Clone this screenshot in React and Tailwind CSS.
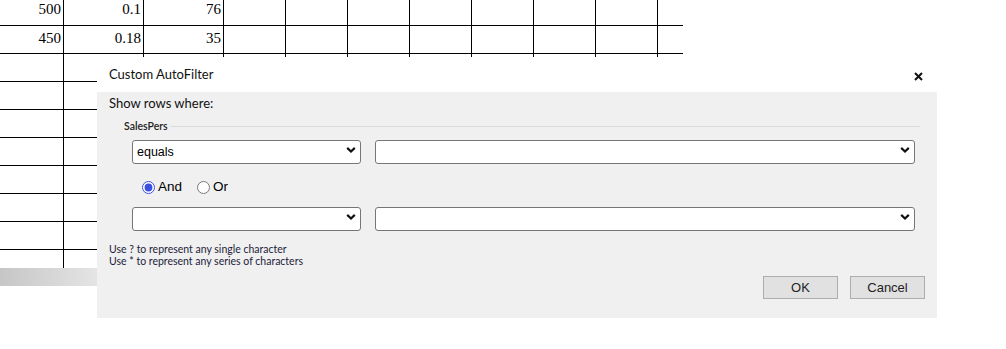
import { useState } from "react";

const widths = [64, 80, 80, 62, 62, 62, 62, 62, 62, 62];
const rows = [
  ["500", "0.1", "76"],
  ["450", "0.18", "35"],
  [], [], [], [], [], [], [],
];

function Chevron() {
  return (
    <svg className="pointer-events-none absolute right-[5px] top-1/2 -translate-y-1/2" width="10" height="7" viewBox="0 0 10 7">
      <path d="M1.2 1.4 L5 5 L8.8 1.4" fill="none" stroke="#111" strokeWidth="2.2" />
    </svg>
  );
}

function Select({ className, value, options }) {
  return (
    <div className={`relative h-6 ${className}`}>
      <select
        defaultValue={value}
        className="h-full w-full appearance-none rounded-[3px] border border-[#767676] bg-white pl-[4px] text-[12.5px] text-black"
        style={{ fontFamily: '"Liberation Sans", Arial, sans-serif' }}
      >
        {options.map((o) => (
          <option key={o}>{o}</option>
        ))}
      </select>
      <Chevron />
    </div>
  );
}

export default function App() {
  const [join, setJoin] = useState("and");
  const ops = ["", "equals", "does not equal", "begins with", "ends with", "contains"];

  return (
    <div className="relative h-[349px] w-[1006px] overflow-hidden bg-white">
      {/* sheet behind */}
      <div style={{ fontFamily: '"Liberation Serif", "Times New Roman", serif' }} className="text-[15px] text-black">
        {rows.map((r, i) => (
          <div key={i} className={`flex w-[683px] border-b border-black ${i === 0 ? "h-[26px]" : "h-[28px]"}`}>
            {widths.map((w, j) => (
              <div
                key={j}
                style={{ width: w }}
                className={`shrink-0 border-r border-black pr-[2px] text-right leading-[17px] ${i === 0 ? "pt-[1px]" : "pt-[4px]"}`}
              >
                {r[j] || ""}
              </div>
            ))}
          </div>
        ))}
        <div className="flex h-[18px]">
          <div className="w-[64px] shrink-0 border-r border-black" />
        </div>
        <div className="h-[18px] w-[180px] bg-gradient-to-r from-[#c6c6c6] to-white" />
      </div>

      {/* dialog */}
      <div
        className="absolute left-[97px] top-[57px] flex h-[261px] w-[840px] flex-col"
        style={{ fontFamily: 'Lato, "Open Sans", sans-serif' }}
      >
        <div className="flex h-[35px] items-center justify-between bg-white pl-3 pr-[14px] text-[13px] text-[#111]">
          <span>Custom AutoFilter</span>
          <svg width="9" height="9" viewBox="0 0 9 9" className="mt-[3px]">
            <path d="M1 1 L8 8 M8 1 L1 8" stroke="#111" strokeWidth="2" />
          </svg>
        </div>
        <div className="flex flex-1 flex-col bg-[#f0f0f0] pl-3 pr-[22px]">
          <div className="pt-[3px] text-[13px] leading-[16px] text-[#111]">Show rows where:</div>
          <div className="mt-[8px] flex items-center gap-[2px] pl-[15px]">
            <span className="text-[10.5px] font-semibold leading-[14px] text-[#222]">SalesPers</span>
            <div className="mr-[-5px] mt-[1px] h-px flex-1 bg-[#dcdcdc]" />
          </div>
          <div className="mt-[5px] flex gap-[14px] pl-[23px]">
            <Select className="w-[229px]" value="equals" options={ops} />
            <Select className="flex-1" value="" options={[""]} />
          </div>
          <div
            className="mt-[18px] flex h-[14px] items-center pl-[33px] text-[13.5px] text-black"
            style={{ fontFamily: '"Liberation Sans", Arial, sans-serif' }}
          >
            <label className="flex items-center gap-[3px]">
              <input
                type="radio"
                name="join"
                checked={join === "and"}
                onChange={() => setJoin("and")}
                className="m-0 h-[13px] w-[13px] accent-[#3b50e0]"
              />
              <span>And</span>
            </label>
            <label className="ml-[15px] flex items-center gap-[3px]">
              <input
                type="radio"
                name="join"
                checked={join === "or"}
                onChange={() => setJoin("or")}
                className="m-0 h-[13px] w-[13px] accent-[#3b50e0]"
              />
              <span>Or</span>
            </label>
          </div>
          <div className="mt-[11px] flex gap-[14px] pl-[23px]">
            <Select className="w-[229px]" value="" options={ops} />
            <Select className="flex-1" value="" options={[""]} />
          </div>
          <div className="mt-[14px] text-[10.5px] leading-[12px] text-[#1c1c3a]">
            <div>Use ? to represent any single character</div>
            <div>Use * to represent any series of characters</div>
          </div>
          <div
            className="mt-[9px] flex justify-end gap-3 text-[13px] text-[#222]"
            style={{ fontFamily: '"Liberation Sans", Arial, sans-serif' }}
          >
            <button className="h-[23px] w-[75px] border border-[#adadad] bg-[#e1e1e1]">OK</button>
            <button className="mr-[-10px] h-[23px] w-[75px] border border-[#adadad] bg-[#e1e1e1]">Cancel</button>
          </div>
        </div>
      </div>
    </div>
  );
}
